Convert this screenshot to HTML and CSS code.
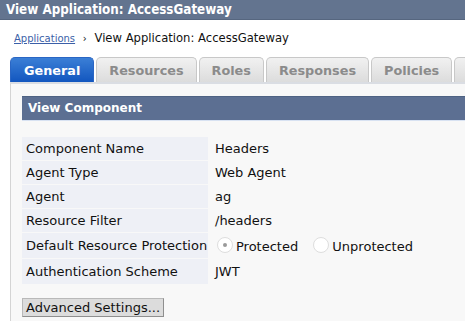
FILE: index.html
```html
<!DOCTYPE html>
<html lang="en">
<head>
    <meta charset="UTF-8">
    <title>View Application: AccessGateway</title>
    <link rel="stylesheet" href="styles.css">
</head>
<body>
    <div class="title-bar">View Application: AccessGateway</div>

    <div class="breadcrumb">
        <a href="#">Applications</a>
        <span class="sep">›</span>
        <span class="current">View Application: AccessGateway</span>
    </div>

    <div class="tabs">
        <div class="tab active">General</div>
        <div class="tab">Resources</div>
        <div class="tab">Roles</div>
        <div class="tab">Responses</div>
        <div class="tab">Policies</div>
        <div class="tab more"></div>
    </div>

    <div class="panel">
        <div class="section-header">View Component</div>

        <table class="details">
            <tr>
                <td class="label">Component Name</td>
                <td class="value">Headers</td>
            </tr>
            <tr>
                <td class="label">Agent Type</td>
                <td class="value">Web Agent</td>
            </tr>
            <tr>
                <td class="label">Agent</td>
                <td class="value">ag</td>
            </tr>
            <tr>
                <td class="label">Resource Filter</td>
                <td class="value">/headers</td>
            </tr>
            <tr class="tall">
                <td class="label">Default Resource Protection</td>
                <td class="value">
                    <span class="radio checked"></span>Protected
                    <span class="radio second"></span>Unprotected
                </td>
            </tr>
            <tr class="tall">
                <td class="label">Authentication Scheme</td>
                <td class="value">JWT</td>
            </tr>
        </table>

        <button class="advanced">Advanced Settings...</button>
    </div>
</body>
</html>
```

FILE: styles.css
```css
body {
    margin: 0;
    height: 100vh;
    display: flex;
    flex-direction: column;
    font-family: "DejaVu Sans", Verdana, sans-serif;
    background: #ffffff;
    overflow: hidden;
}
.title-bar {
    flex: none;
    height: 19px;
    line-height: 19px;
    padding-left: 6px;
    background: #63748f;
    border-bottom: 1px solid #56667f;
    color: #ffffff;
    font-family: "DejaVu Sans Condensed", "DejaVu Sans", sans-serif;
    font-weight: bold;
    font-size: 13.3px;
    white-space: nowrap;
}
.breadcrumb {
    flex: none;
    padding: 11px 0 0 14px;
    height: 19px;
    font-size: 11.6px;
    color: #111;
}
.breadcrumb a {
    font-size: 10px;
    color: #3b5fa8;
}
.breadcrumb .sep {
    font-size: 10px;
    margin: 0 4px;
}
.tabs {
    flex: none;
    display: flex;
    gap: 2px;
    padding: 7px 0 0 10px;
    white-space: nowrap;
}
.tab {
    flex: none;
    height: 24px;
    line-height: 26px;
    padding: 0 12px;
    font-size: 12.8px;
    font-weight: bold;
    color: #8b8b8b;
    background: linear-gradient(#f1f1f1, #dcdcdc);
    border: 1px solid #c8c8c8;
    border-bottom: none;
    border-radius: 5px 5px 0 0;
}
.tab.active {
    color: #ffffff;
    padding: 0 13px;
    background: linear-gradient(#3b7fd6, #1256bf);
    border-color: #2a66c4;
}
.tab.more {
    width: 30px;
}
.panel {
    flex: 1;
    margin-left: 10px;
    padding: 12px 0 0 11px;
    background: #f8f8f8;
    border-left: 1px solid #d4d4d4;
    border-top: 2px solid #dadde3;
}
.section-header {
    height: 23px;
    line-height: 23px;
    padding-left: 6px;
    background: #5c6f92;
    border-top: 1px solid #4e6283;
    border-bottom: 1px solid #d8e2f2;
    color: #ffffff;
    font-weight: bold;
    font-size: 12px;
}
.details {
    margin-top: 15px;
    border-collapse: separate;
    border-spacing: 0 1px;
    font-size: 13px;
    color: #111;
}
.details td {
    height: 23px;
    padding: 0;
    white-space: nowrap;
}
.details tr.tall td {
    height: 25px;
}
.details .label {
    width: 182px;
    padding-left: 4px;
    background: #eef0f6;
}
.details .value {
    padding-left: 7px;
}
.radio {
    display: inline-block;
    width: 14px;
    height: 14px;
    margin: 0 3px 0 2px;
    vertical-align: -2px;
    border: 1px solid #dedede;
    border-radius: 50%;
    background: #ffffff;
    position: relative;
}
.radio.second {
    margin-left: 11px;
}
.radio.checked::after {
    content: "";
    position: absolute;
    left: 5px;
    top: 5px;
    width: 4px;
    height: 4px;
    border-radius: 50%;
    background: #9a9a9a;
}
.advanced {
    margin-top: 13px;
    padding: 1px 3px;
    font-family: "DejaVu Sans", Verdana, sans-serif;
    font-size: 13px;
    color: #111;
    background: #dcdcdc;
    border: 1px solid #b9b9b9;
    border-right-color: #8f8f8f;
    border-bottom-color: #8f8f8f;
    border-radius: 0;
}
```
